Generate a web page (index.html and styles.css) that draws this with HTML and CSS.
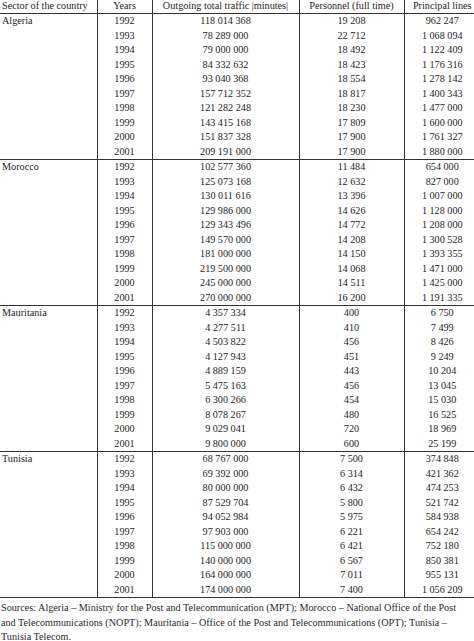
FILE: index.html
```html
<!DOCTYPE html>
<html>
<head>
<meta charset="utf-8">
<link rel="stylesheet" href="styles.css">
</head>
<body>
<div class="page">
<table class="data">
<colgroup>
<col class="c-sector"><col class="c-year"><col class="c-traffic"><col class="c-staff"><col class="c-lines">
</colgroup>
<thead>
<tr><th class="left">Sector of the country</th><th>Years</th><th>Outgoing total traffic |minutes|</th><th>Personnel (full time)</th><th>Principal lines</th></tr>
</thead>
<tbody>
<tr><td class="left">Algeria</td><td>1992</td><td>118 014 368</td><td>19 208</td><td>962 247</td></tr>
<tr><td></td><td>1993</td><td>78 289 000</td><td>22 712</td><td>1 068 094</td></tr>
<tr><td></td><td>1994</td><td>79 000 000</td><td>18 492</td><td>1 122 409</td></tr>
<tr><td></td><td>1995</td><td>84 332 632</td><td>18 423</td><td>1 176 316</td></tr>
<tr><td></td><td>1996</td><td>93 040 368</td><td>18 554</td><td>1 278 142</td></tr>
<tr><td></td><td>1997</td><td>157 712 352</td><td>18 817</td><td>1 400 343</td></tr>
<tr><td></td><td>1998</td><td>121 282 248</td><td>18 230</td><td>1 477 000</td></tr>
<tr><td></td><td>1999</td><td>143 415 168</td><td>17 809</td><td>1 600 000</td></tr>
<tr><td></td><td>2000</td><td>151 837 328</td><td>17 900</td><td>1 761 327</td></tr>
<tr><td></td><td>2001</td><td>209 191 000</td><td>17 900</td><td>1 880 000</td></tr>
</tbody>
<tbody>
<tr><td class="left">Morocco</td><td>1992</td><td>102 577 360</td><td>11 484</td><td>654 000</td></tr>
<tr><td></td><td>1993</td><td>125 073 168</td><td>12 632</td><td>827 000</td></tr>
<tr><td></td><td>1994</td><td>130 011 616</td><td>13 396</td><td>1 007 000</td></tr>
<tr><td></td><td>1995</td><td>129 986 000</td><td>14 626</td><td>1 128 000</td></tr>
<tr><td></td><td>1996</td><td>129 343 496</td><td>14 772</td><td>1 208 000</td></tr>
<tr><td></td><td>1997</td><td>149 570 000</td><td>14 208</td><td>1 300 528</td></tr>
<tr><td></td><td>1998</td><td>181 000 000</td><td>14 150</td><td>1 393 355</td></tr>
<tr><td></td><td>1999</td><td>219 500 000</td><td>14 068</td><td>1 471 000</td></tr>
<tr><td></td><td>2000</td><td>245 000 000</td><td>14 511</td><td>1 425 000</td></tr>
<tr><td></td><td>2001</td><td>270 000 000</td><td>16 200</td><td>1 191 335</td></tr>
</tbody>
<tbody>
<tr><td class="left">Mauritania</td><td>1992</td><td>4 357 334</td><td>400</td><td>6 750</td></tr>
<tr><td></td><td>1993</td><td>4 277 511</td><td>410</td><td>7 499</td></tr>
<tr><td></td><td>1994</td><td>4 503 822</td><td>456</td><td>8 426</td></tr>
<tr><td></td><td>1995</td><td>4 127 943</td><td>451</td><td>9 249</td></tr>
<tr><td></td><td>1996</td><td>4 889 159</td><td>443</td><td>10 204</td></tr>
<tr><td></td><td>1997</td><td>5 475 163</td><td>456</td><td>13 045</td></tr>
<tr><td></td><td>1998</td><td>6 300 266</td><td>454</td><td>15 030</td></tr>
<tr><td></td><td>1999</td><td>8 078 267</td><td>480</td><td>16 525</td></tr>
<tr><td></td><td>2000</td><td>9 029 041</td><td>720</td><td>18 969</td></tr>
<tr><td></td><td>2001</td><td>9 800 000</td><td>600</td><td>25 199</td></tr>
</tbody>
<tbody>
<tr><td class="left">Tunisia</td><td>1992</td><td>68 767 000</td><td>7 500</td><td>374 848</td></tr>
<tr><td></td><td>1993</td><td>69 392 000</td><td>6 314</td><td>421 362</td></tr>
<tr><td></td><td>1994</td><td>80 000 000</td><td>6 432</td><td>474 253</td></tr>
<tr><td></td><td>1995</td><td>87 529 704</td><td>5 800</td><td>521 742</td></tr>
<tr><td></td><td>1996</td><td>94 052 984</td><td>5 975</td><td>584 938</td></tr>
<tr><td></td><td>1997</td><td>97 903 000</td><td>6 221</td><td>654 242</td></tr>
<tr><td></td><td>1998</td><td>115 000 000</td><td>6 421</td><td>752 180</td></tr>
<tr><td></td><td>1999</td><td>140 000 000</td><td>6 567</td><td>850 381</td></tr>
<tr><td></td><td>2000</td><td>164 000 000</td><td>7 011</td><td>955 131</td></tr>
<tr><td></td><td>2001</td><td>174 000 000</td><td>7 400</td><td>1 056 209</td></tr>
</tbody>
</table>
<p class="sources">Sources: Algeria – Ministry for the Post and Telecommunication (MPT); Morocco – National Office of the Post<br>and Telecommunications (NOPT); Mauritania – Office of the Post and Telecommunications (OPT); Tunisia –<br>Tunisia Telecom.</p>
</div>
</body>
</html>
```

FILE: styles.css
```css
html, body {
  margin: 0;
  padding: 0;
  background: #ffffff;
}
body {
  width: 474px;
  overflow: hidden;
  font-family: "Liberation Serif", "Times New Roman", serif;
  font-size: 10.2px;
  color: #1e1e1e;
}
.page {
  width: 480px;
}
.data {
  width: 480px;
  border-collapse: collapse;
  table-layout: fixed;
}
.c-sector { width: 97px; }
.c-year { width: 55px; }
.c-traffic { width: 147px; }
.c-staff { width: 105px; }
.c-lines { width: 76px; }
.data th,
.data td {
  padding: 0;
  text-align: center;
  font-weight: normal;
  white-space: nowrap;
  overflow: hidden;
}
.data th {
  height: 13px;
  line-height: 12px;
  vertical-align: top;
  border-bottom: 1px solid #333333;
}
.data td {
  height: 14.5px;
  line-height: 14.5px;
}
.data th + th,
.data td + td {
  border-left: 1px solid #333333;
}
.data .left {
  text-align: left;
  padding-left: 2px;
}
.data tbody {
  border-bottom: 1px solid #333333;
}
.sources {
  margin: 3px 0 0 0;
  padding-left: 1px;
  line-height: 14.5px;
  width: 472px;
  white-space: nowrap;
  color: #2a2a2a;
}
```
